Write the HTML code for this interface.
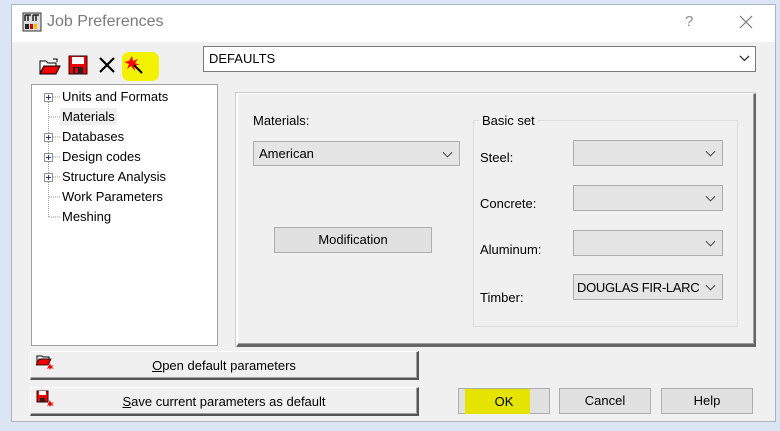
<!DOCTYPE html>
<html><head><style>
*{margin:0;padding:0;box-sizing:border-box}
body{width:780px;height:431px;background:#dce5f4;position:relative;overflow:hidden;font-family:"Liberation Sans",sans-serif;font-size:13px;color:#000}
.a{position:absolute}
.dlg{left:11px;top:4px;width:765px;height:418px;background:#f0f0f0;border:1px solid #aab4c4}
.title{left:12px;top:5px;width:763px;height:37px;background:#fff}
.combo{position:absolute;background:#e5e5e5;border:1px solid #adadad}
.combo:after{content:"";position:absolute;right:8px;top:50%;width:6px;height:6px;border-right:1.3px solid #444;border-bottom:1.3px solid #444;transform:translateY(-70%) rotate(45deg)}
.btn{position:absolute;background:#e1e1e1;border:1px solid #adadad;text-align:center;font-size:13px}
.btn3{position:absolute;background:#f0f0f0;border-top:1px solid #fff;border-left:1px solid #fff;border-right:2px solid #555;border-bottom:2px solid #555;box-shadow:inset -1px -1px 0 #a0a0a0;text-align:center;font-size:13px}
.tree div{position:absolute;left:30px;font-size:13px}
.plus{position:absolute;left:12px;width:9px;height:9px;border:1px solid #919191;background:#fff}
.plus:before{content:"";position:absolute;left:1px;top:3px;width:5px;height:1px;background:#1a3a8a}
.plus:after{content:"";position:absolute;left:3px;top:1px;width:1px;height:5px;background:#1a3a8a}
</style></head><body>
<div class="a dlg"></div>
<div class="a title"></div>
<svg class="a" style="left:22px;top:12px" width="20" height="20"><rect x="1" y="1" width="18" height="18" fill="#ddd" stroke="#333"/><path d="M3 3h6M3 3v6M6 3v6M11 3h6M11 3v6M14 3v6" stroke="#222" stroke-width="1.5"/><rect x="3" y="12" width="4" height="5" fill="#222"/><rect x="8" y="12" width="3" height="5" fill="#c00"/><rect x="12" y="12" width="3" height="5" fill="#e8c000"/></svg>
<div class="a" style="left:47px;top:13px;font-size:16px;color:#7a7a7a">Job Preferences</div>
<div class="a" style="left:685px;top:13px;font-size:15px;color:#888">?</div>
<svg class="a" style="left:739px;top:15px" width="14" height="14"><path d="M1 1L13 13M13 1L1 13" stroke="#777" stroke-width="1.2"/></svg>
<svg class="a" style="left:39px;top:57px" width="22" height="18"><path d="M1 4h6l2 2h8v3H5L1 16z" fill="#fff" stroke="#000"/><path d="M5 9h16l-4 8H1z" fill="#e00" stroke="#000"/><path d="M14 2l4 0 0 3" stroke="#000" fill="none"/></svg>
<svg class="a" style="left:68px;top:55px" width="20" height="20"><rect x="1" y="1" width="18" height="18" fill="#e00" stroke="#300"/><rect x="4" y="2" width="12" height="7" fill="#fff"/><rect x="5" y="12" width="10" height="7" fill="#222"/><rect x="7" y="13" width="3" height="5" fill="#e00"/></svg>
<svg class="a" style="left:98px;top:56px" width="18" height="18"><path d="M2 2L16 16M16 2L2 16" stroke="#000" stroke-width="2.2"/></svg>
<div class="a" style="left:122px;top:52px;width:37px;height:29px;background:#f2f200;border-radius:7px"></div>
<svg class="a" style="left:124px;top:55px" width="22" height="22"><path d="M8 1L9 6 14 4 11 8 16 10 10 10 11 16 7 11 3 14 5 9 0 7 5 6z" fill="#f00"/><path d="M10 10L18 18" stroke="#000" stroke-width="2"/></svg>
<div class="a" style="left:203px;top:46px;width:553px;height:26px;background:#fff;border:1px solid #7a7a7a"></div>
<div class="a" style="left:209px;top:51px">DEFAULTS</div>
<svg class="a" style="left:739px;top:55px" width="11" height="8"><path d="M1 1l4.5 4.5L10 1" stroke="#333" fill="none" stroke-width="1.3"/></svg>
<div class="a tree" style="left:31px;top:84px;width:187px;height:262px;background:#fff;border:1px solid #a0a0a0">
<svg class="a" style="left:0;top:0" width="60" height="140"><path d="M16.5 17V133M21 12H29M17 32H29M21 52H29M21 72H29M21 92H29M17 112H29M17 132H29" stroke="#999" stroke-dasharray="1 1"/></svg>
<span class="plus" style="top:8px"></span><span class="plus" style="top:48px"></span><span class="plus" style="top:68px"></span><span class="plus" style="top:88px"></span>
<div style="top:4px">Units and Formats</div>
<div style="top:23px;left:28px;background:#efefef;padding:1px 2px">Materials</div>
<div style="top:44px">Databases</div>
<div style="top:64px">Design codes</div>
<div style="top:84px">Structure Analysis</div>
<div style="top:104px">Work Parameters</div>
<div style="top:124px">Meshing</div>
</div>
<div class="a" style="left:236px;top:93px;width:520px;height:254px;border-top:1px solid #fff;border-left:2px solid #fff;border-right:2px solid #666;border-bottom:3px solid #666;box-shadow:inset -1px -1px 0 #a0a0a0,-1px -1px 0 #ccc"></div>
<div class="a" style="left:253px;top:113px">Materials:</div>
<div class="combo" style="left:253px;top:141px;width:207px;height:25px"></div>
<div class="a" style="left:259px;top:146px">American</div>
<div class="btn" style="left:274px;top:227px;width:158px;height:26px;line-height:24px">Modification</div>
<div class="a" style="left:473px;top:120px;width:265px;height:207px;border:1px solid #dcdcdc"></div>
<div class="a" style="left:479px;top:113px;background:#f0f0f0;padding:0 3px">Basic set</div>
<div class="a" style="left:480px;top:150px">Steel:</div>
<div class="a" style="left:480px;top:196px">Concrete:</div>
<div class="a" style="left:480px;top:242px">Aluminum:</div>
<div class="a" style="left:480px;top:290px">Timber:</div>
<div class="combo" style="left:573px;top:140px;width:150px;height:26px"></div>
<div class="combo" style="left:573px;top:185px;width:150px;height:26px"></div>
<div class="combo" style="left:573px;top:230px;width:150px;height:26px"></div>
<div class="combo" style="left:573px;top:274px;width:150px;height:26px"></div>
<div class="a" style="left:577px;top:280px;letter-spacing:-0.3px">DOUGLAS FIR-LARC</div>
<div class="btn3" style="left:30px;top:351px;width:389px;height:29px;line-height:27px"><u>O</u>pen default parameters</div>
<div class="btn3" style="left:30px;top:387px;width:389px;height:29px;line-height:27px"><u>S</u>ave current parameters as default</div>
<svg class="a" style="left:36px;top:354px" width="20" height="16"><path d="M1 2h5l1 1h6v2H4L1 11z" fill="#fff" stroke="#000"/><path d="M3 5h12l-3 6H0z" fill="#e00" stroke="#000" stroke-width=".8"/><path d="M14 9l1 3 3-1-2 2 2 2-3-1-1 2-1-2-2 1 1-2z" fill="#e00"/></svg>
<svg class="a" style="left:36px;top:390px" width="20" height="18"><rect x="1" y="1" width="11" height="11" fill="#e00" stroke="#300"/><rect x="3" y="1" width="7" height="4" fill="#fff"/><rect x="4" y="8" width="5" height="4" fill="#222"/><path d="M14 10l1 3 3-1-2 2 2 2-3-1-1 2-1-2-2 1 1-2z" fill="#e00"/></svg>
<div class="btn" style="left:458px;top:388px;width:92px;height:26px"></div>
<div class="a" style="left:465px;top:389px;width:65px;height:25px;background:#e4e400"></div>
<div class="a" style="left:458px;top:394px;width:92px;text-align:center">OK</div>
<div class="btn" style="left:559px;top:388px;width:92px;height:26px;line-height:24px">Cancel</div>
<div class="btn" style="left:661px;top:388px;width:92px;height:26px;line-height:24px">Help</div>
</body></html>
